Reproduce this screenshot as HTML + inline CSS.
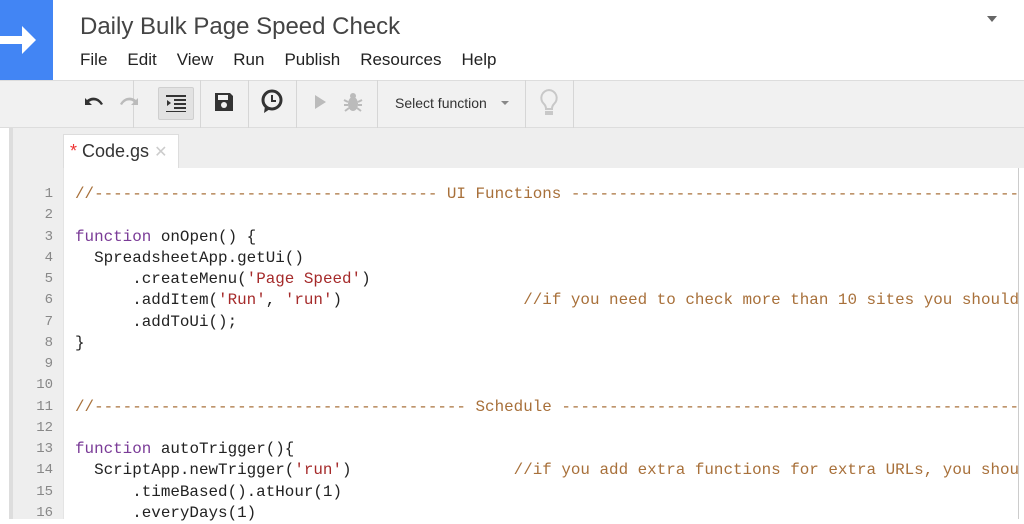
<!DOCTYPE html>
<html><head><style>
*{margin:0;padding:0;box-sizing:border-box}
body{width:1024px;height:519px;overflow:hidden;background:#fff;font-family:"Liberation Sans",sans-serif;position:relative}
.abs{position:absolute}
.code{position:absolute;left:75px;top:184px;font-family:"Liberation Mono",monospace;font-size:15.9px;line-height:21.27px;white-space:pre;color:#222;width:943px;overflow:hidden}
.nums{position:absolute;left:13px;width:40px;top:184px;font-family:"Liberation Mono",monospace;font-size:14px;line-height:21.27px;text-align:right;color:#888;white-space:pre}
.c{color:#a8703a}.k{color:#7a3b97}.s{color:#a52a2a}
.menu span{margin-right:20px}
.sep{position:absolute;top:80px;width:1px;height:48px;background:#d6d6d6}
</style></head><body>
<div class="abs" style="left:0;top:0;width:53px;height:80px;background:#4285f4"></div>
<svg class="abs" style="left:0;top:22px" width="40" height="36" viewBox="0 0 40 36"><path d="M0 14h22V4l14 14-14 14V22H0z" fill="#fff"/></svg>
<div class="abs" style="left:80px;top:13px;font-size:24px;color:#444">Daily Bulk Page Speed Check</div>
<div class="abs menu" style="left:80px;top:50px;font-size:17px;color:#222;white-space:nowrap"><span>File</span><span>Edit</span><span>View</span><span>Run</span><span>Publish</span><span>Resources</span><span>Help</span></div>
<svg class="abs" style="left:986px;top:15px" width="12" height="8"><path d="M1 1h10L6 7z" fill="#666"/></svg>
<div class="abs" style="left:0;top:80px;width:1024px;height:48px;background:#f1f1f1;border-top:1px solid #ddd;border-bottom:1px solid #ddd"></div>
<div class="sep" style="left:133px"></div><div class="sep" style="left:200px"></div><div class="sep" style="left:248px"></div><div class="sep" style="left:296px"></div><div class="sep" style="left:377px"></div><div class="sep" style="left:525px"></div><div class="sep" style="left:573px"></div>
<div class="abs" style="left:158px;top:87px;width:36px;height:33px;background:#e2e2e2;border:1px solid #cfcfcf;border-radius:2px"></div>
<svg class="abs" style="left:82px;top:94px" width="24" height="16"><path d="M3 4v7h7L7 8c4-3 9-2 12 3l2-1C17 3 10 2 5 6z" fill="#333"/></svg>
<svg class="abs" style="left:117px;top:94px" width="24" height="16"><path d="M21 4v7h-7l3-3c-4-3-9-2-12 3L3 10C7 3 14 2 19 6z" fill="#bbb"/></svg>
<svg class="abs" style="left:165px;top:94px" width="22" height="18"><path d="M1 1h20v2H1zM9 5h12v2H9zM9 9h12v2H9zM9 13h12v2H9zM1 17h20v1H1zM2 6l4 3-4 3z" fill="#333"/></svg>
<svg class="abs" style="left:214px;top:92px" width="20" height="20"><path d="M1 1h15l3 3v15H1z" fill="#333"/><rect x="4" y="3" width="10" height="5" fill="#f1f1f1"/><circle cx="10" cy="13" r="3" fill="#f1f1f1"/></svg>
<svg class="abs" style="left:260px;top:89px" width="24" height="26"><circle cx="12" cy="11" r="9" fill="none" stroke="#333" stroke-width="3"/><path d="M12 6v6h4" fill="none" stroke="#333" stroke-width="2"/><path d="M5 17l-1 7 6-4z" fill="#333"/></svg>
<svg class="abs" style="left:313px;top:94px" width="14" height="16"><path d="M2 1l11 7-11 7z" fill="#bbb"/></svg>
<svg class="abs" style="left:343px;top:92px" width="20" height="20"><ellipse cx="10" cy="12" rx="5" ry="7" fill="#bbb"/><circle cx="10" cy="4" r="3" fill="#bbb"/><path d="M1 8l4 2M19 8l-4 2M1 13h4M19 13h-4M2 19l4-3M18 19l-4-3" stroke="#bbb" stroke-width="2"/></svg>
<div class="abs" style="left:395px;top:95px;font-size:14px;color:#333">Select function</div>
<svg class="abs" style="left:501px;top:101px" width="9" height="6"><path d="M0 0h8L4 4z" fill="#888"/></svg>
<svg class="abs" style="left:538px;top:88px" width="22" height="30"><path d="M11 2a8 8 0 0 0-5 14c1 1 2 3 2 5h6c0-2 1-4 2-5a8 8 0 0 0-5-14z" fill="none" stroke="#c8c8c8" stroke-width="2"/><rect x="7" y="23" width="8" height="4" fill="#c8c8c8"/></svg>
<div class="abs" style="left:9px;top:128px;width:1015px;height:391px;background:#eee;border-left:4px solid #ddd"></div>
<div class="abs" style="left:63px;top:134px;width:116px;height:36px;background:#fff;border:1px solid #ddd;border-bottom:none"></div>
<div class="abs" style="left:70px;top:141px;font-size:18px;color:#333"><span style="color:#e33">*</span> Code.gs <span style="color:#ccc;font-size:16px">✕</span></div>
<div class="abs" style="left:63px;top:168px;width:955px;height:351px;background:#fff;border-left:1px solid #e4e4e4"></div>
<div class="abs" style="left:1018px;top:168px;width:6px;height:351px;background:#fff;border-left:1px solid #ccc"></div>
<div class="nums">1
2
3
4
5
6
7
8
9
10
11
12
13
14
15
16</div>
<div class="code"><span class="c">//------------------------------------ UI Functions ------------------------------------------------------------</span>

<span class="k">function</span> onOpen() {
  SpreadsheetApp.getUi()
      .createMenu(<span class="s">'Page Speed'</span>)
      .addItem(<span class="s">'Run'</span>, <span class="s">'run'</span>)                   <span class="c">//if you need to check more than 10 sites you should</span>
      .addToUi();
}


<span class="c">//--------------------------------------- Schedule ----------------------------------------------------------</span>

<span class="k">function</span> autoTrigger(){
  ScriptApp.newTrigger(<span class="s">'run'</span>)                 <span class="c">//if you add extra functions for extra URLs, you should</span>
      .timeBased().atHour(1)
      .everyDays(1)</div>
</body></html>
